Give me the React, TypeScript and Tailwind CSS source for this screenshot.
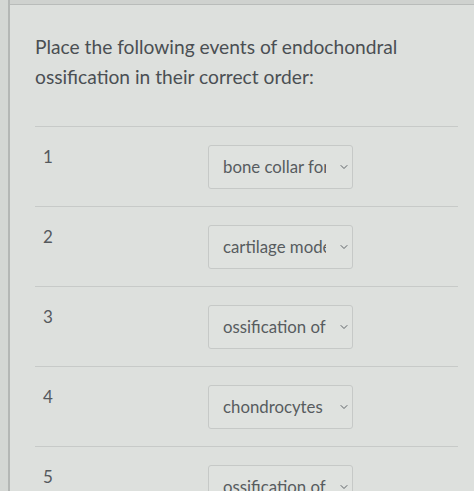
import { ChevronDown } from "lucide-react";

const answers = [
  "bone collar forms around the diaphysis",
  "cartilage model develops",
  "ossification of the diaphysis",
  "chondrocytes enlarge and die",
  "ossification of the epiphyses",
];

function OrderRow({ index, value }: { index: number; value: string }) {
  return (
    <div className="flex items-start border-t border-[#c7cac8] pl-2 pt-[18px] pb-[17px]">
      <div className="w-[165px] text-[17px] leading-6 text-[#55595d]">{index}</div>
      <div className="flex h-[44px] w-[145px] items-center rounded-[3px] border border-[#c6c9c7] bg-[#dfe2df] pl-[14px]">
        <span className="w-[103px] overflow-hidden whitespace-nowrap text-[16.8px] leading-6 text-[#575c60]">
          {value}
        </span>
        <ChevronDown className="ml-[12px] h-[12px] w-[12px] text-[#5d6267]" strokeWidth={2} />
      </div>
    </div>
  );
}

export default function App() {
  return (
    <div
      className="flex h-[491px] w-[474px] overflow-hidden bg-[#d8dbd8]"
      style={{ fontFamily: "Lato, 'Open Sans', sans-serif" }}
    >
      <div className="w-[10px] shrink-0 border-r-2 border-[#b4b7b5] bg-[#d4d7d4]" />
      <div className="flex flex-1 flex-col bg-[#dde0dd]">
        <div className="h-[5px] shrink-0 border-b border-[#b9bcba] bg-[#cfd2cf]" />
        <div className="pl-[25px] pr-4 pt-[27px]">
          <h1 className="mb-[34px] text-[19.2px] leading-[30px] text-[#4a4f53]">
            Place the following events of endochondral ossification in their correct order:
          </h1>
          {answers.map((a, i) => (
            <OrderRow key={i} index={i + 1} value={a} />
          ))}
        </div>
      </div>
    </div>
  );
}
